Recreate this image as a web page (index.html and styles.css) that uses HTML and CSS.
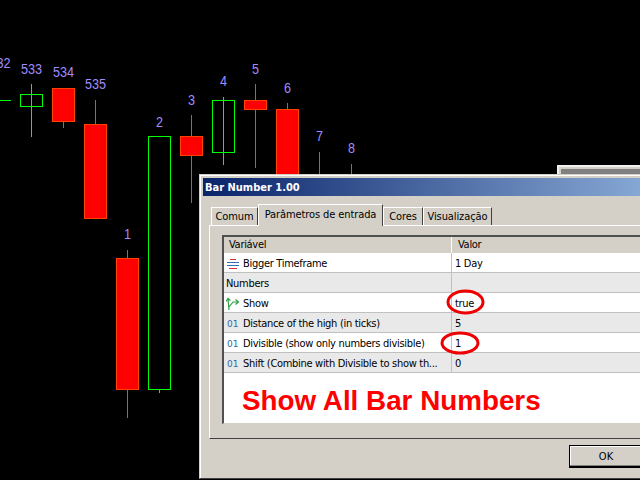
FILE: index.html
```html
<!DOCTYPE html>
<html lang="pt">
<head>
<meta charset="utf-8">
<title>Bar Number 1.00</title>
<link rel="stylesheet" href="styles.css">
</head>
<body>
<main class="desktop">
  <svg class="chart" width="640" height="480" viewBox="0 0 640 480">
    <g class="green-line">
      <path d="M0 100.5H11M31.5 84V137M159.5 390V393M223.5 97V165"/>
      <rect x="20.5" y="94.5" width="22" height="12"/>
      <rect x="148.5" y="136.5" width="22" height="253"/>
      <rect x="212.5" y="100.5" width="22" height="52"/>
    </g>
    <g class="red-line">
      <path d="M63.5 122V128M95.5 100V124M127.5 250V418M191.5 115V203M255.5 84V168M287.5 103V109M319.5 152V176M351.5 164V176"/>
      <rect x="52.5" y="88.5" width="22" height="33"/>
      <rect x="84.5" y="124.5" width="22" height="94"/>
      <rect x="116.5" y="258.5" width="22" height="131"/>
      <rect x="180.5" y="136.5" width="22" height="19"/>
      <rect x="244.5" y="100.5" width="22" height="9"/>
      <rect x="276.5" y="109.5" width="22" height="80"/>
    </g>
    <g class="bar-label">
      <text x="0" y="68">532</text>
      <text x="31.5" y="74">533</text>
      <text x="63.5" y="77">534</text>
      <text x="95.5" y="89">535</text>
      <text x="127.5" y="239">1</text>
      <text x="159.5" y="127">2</text>
      <text x="191.5" y="105">3</text>
      <text x="223.5" y="86">4</text>
      <text x="255.5" y="74">5</text>
      <text x="287.5" y="93">6</text>
      <text x="319.5" y="141">7</text>
      <text x="351.5" y="153">8</text>
    </g>
  </svg>

  <div class="back-window"><div class="back-title"></div></div>

  <section class="dialog">
    <header class="titlebar">Bar Number 1.00</header>
    <div class="body">
      <nav class="tabs">
        <span class="tab tab-common">Comum</span>
        <span class="tab tab-inputs active">Parâmetros de entrada</span>
        <span class="tab tab-colors">Cores</span>
        <span class="tab tab-view">Visualização</span>
      </nav>
      <div class="panel">
        <div class="table">
          <div class="row head"><span class="name">Variável</span><span class="value">Valor</span></div>
          <div class="row">
            <span class="name">
              <svg class="icon" viewBox="0 0 14 14"><path class="i-red" d="M4 2.5H10M3 11.5H11"/><path class="i-blue" d="M1 5.5H13M1 8.5H13"/></svg>
              Bigger Timeframe</span>
            <span class="value">1 Day</span>
          </div>
          <div class="row alt"><span class="name group">Numbers</span><span class="value"></span></div>
          <div class="row">
            <span class="name">
              <svg class="icon" viewBox="0 0 14 14"><path class="i-green" d="M3 13L2 2M0 4.5L2 1.5L4.5 3.5M3 10L7 5H12.5M9.5 2.5L12.5 5L9.5 7.5"/></svg>
              Show</span>
            <span class="value">true</span>
          </div>
          <div class="row alt"><span class="name"><span class="num">01</span>Distance of the high (in ticks)</span><span class="value">5</span></div>
          <div class="row"><span class="name"><span class="num">01</span>Divisible (show only numbers divisible)</span><span class="value">1</span></div>
          <div class="row alt"><span class="name"><span class="num">01</span>Shift (Combine with Divisible to show th...</span><span class="value">0</span></div>
          <p class="note">Show All Bar Numbers</p>
        </div>
      </div>
      <div class="actions"><button class="ok" type="button">OK</button></div>
    </div>
  </section>

  <svg class="marks" width="640" height="480" viewBox="0 0 640 480">
    <ellipse cx="465.5" cy="302" rx="17.5" ry="11"/>
    <ellipse cx="460" cy="343" rx="18" ry="10"/>
  </svg>
</main>
</body>
</html>
```
FILE: styles.css
```css
html, body { margin: 0; padding: 0; background: #000; }
.desktop { position: relative; width: 640px; height: 480px; overflow: hidden; background: #000; }
.chart, .marks { position: absolute; left: 0; top: 0; }
.green-line path, .green-line rect { stroke: #00ff00; stroke-width: 1; fill: none; }
.red-line path, .red-line rect { stroke: #ff4500; stroke-width: 1; }
.red-line rect { fill: #ff0000; }
.red-line path { fill: none; }
.bar-label text { font: 14.5px "Liberation Sans", sans-serif; fill: #a08cff; text-anchor: middle; transform-box: fill-box; transform-origin: center; transform: scaleX(0.87); }
.marks ellipse { fill: none; stroke: #ee0000; stroke-width: 3; }

.back-window { position: absolute; left: 557px; top: 165px; width: 100px; height: 20px; box-sizing: border-box; background: #d4d0c8; border: 2px solid #f0f0f0; padding: 2px; }
.back-title { height: 20px; background: #808080; }

.dialog { position: absolute; left: 199px; top: 174px; width: 560px; height: 305px; box-sizing: border-box; background: #d4d0c8; border-top: 1px solid #d4d0c8; border-left: 1px solid #d4d0c8; border-bottom: 1px solid #404040; box-shadow: inset 1px 1px 0 #fff; padding: 3px 3px 0 3px; display: flex; flex-direction: column; font: 11px "DejaVu Sans Condensed", "DejaVu Sans", sans-serif; color: #000; }
.titlebar { height: 18px; line-height: 20px; padding-left: 2px; flex: none; font-weight: bold; color: #fff; background: linear-gradient(90deg, #0a246a, #a6caf0); }
.body { flex: 1; display: flex; flex-direction: column; padding: 8px 0 0 6px; }
.tabs { display: flex; height: 21px; padding-left: 2px; align-items: flex-end; position: relative; z-index: 1; letter-spacing: -0.1px; }
.tab { height: 18px; line-height: 18px; box-sizing: border-box; text-align: center; white-space: nowrap; background: #d4d0c8; border: 1px solid #fff; border-right: 1px solid #404040; border-bottom: 0; }
.tab.active { height: 22px; line-height: 19px; margin-bottom: -1px; }
.tab-common { width: 47px; }
.tab-inputs { width: 125px; }
.tab-colors { width: 40px; }
.tab-view { width: 69px; }
.panel { height: 214px; box-sizing: border-box; background: #d4d0c8; border-top: 1px solid #fff; border-left: 1px solid #fff; border-bottom: 1px solid #404040; padding: 9px 0 0 12px; }
.table { box-sizing: border-box; height: 189px; background: #fff; border-top: 2px solid #505050; border-left: 2px solid #505050; border-bottom: 1px solid #d4d0c8; }
.row { display: grid; grid-template-columns: 227px 1fr; height: 20px; box-sizing: border-box; border-bottom: 1px solid #c0c0c0; background: #fff; line-height: 18px; letter-spacing: -0.3px; }
.row.alt { background: #e9e9e9; }
.row.head { height: 16px; background: #d4d0c8; border-bottom: 0; line-height: 16px; }
.row.head .name { padding: 0 0 0 5px; }
.row.head .value { padding: 0 0 0 6px; border-left: 1px solid #fff; }
.name { display: flex; align-items: center; padding: 2px 0 0 3px; box-sizing: border-box; white-space: nowrap; overflow: hidden; }
.name.group { padding-left: 2px; }
.value { padding: 2px 0 0 3px; box-sizing: border-box; border-left: 1px solid #c0c0c0; white-space: nowrap; }
.icon { width: 14px; height: 14px; margin: 0 3px 0 -1px; flex: none; }
.i-blue { stroke: #2f6fb5; stroke-width: 1; fill: none; }
.i-red { stroke: #d83030; stroke-width: 1; fill: none; }
.i-green { stroke: #2ea043; stroke-width: 1.2; fill: none; }
.num { width: 16px; flex: none; color: #2a6ca8; font: 9px "DejaVu Sans", sans-serif; letter-spacing: 0; }
.note { margin: 0; padding: 12px 0 0 18px; font: bold 27.8px "Liberation Sans", sans-serif; color: #ff0000; white-space: nowrap; letter-spacing: 0; }
.actions { padding: 6px 0 0 360px; }
.ok { width: 75px; height: 23px; background: #d4d0c8; border: 2px solid #000; border-top-width: 1px; border-left-width: 1px; font: inherit; color: #000; padding: 0; box-shadow: inset -1px -1px 0 #808080, inset 1px 1px 0 #fff; }
```
